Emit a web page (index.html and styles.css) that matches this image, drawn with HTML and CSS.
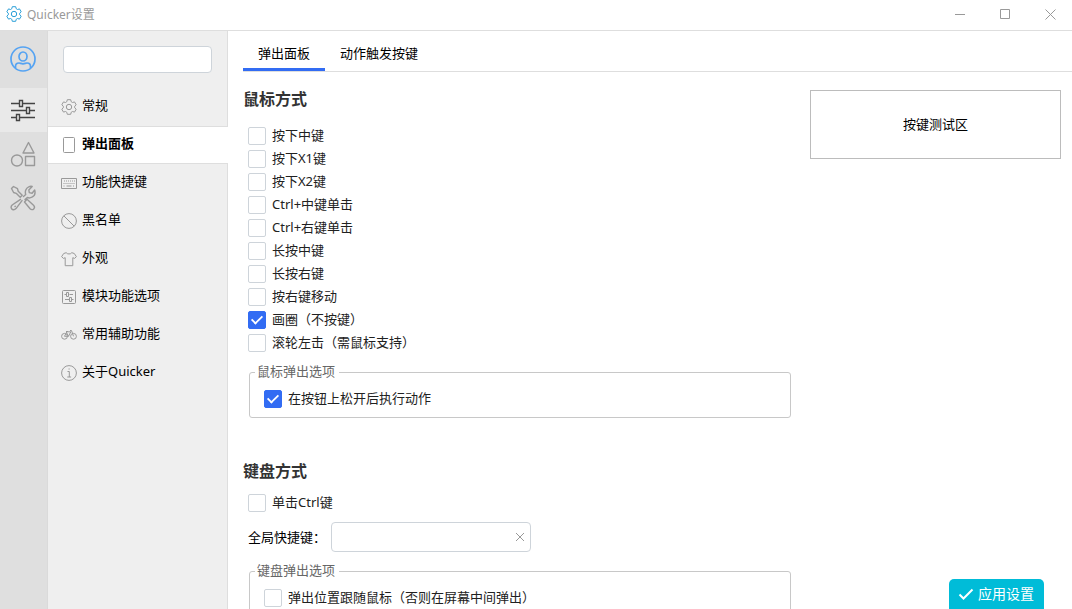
FILE: index.html
```html
<!DOCTYPE html>
<html lang="zh-CN">
<head>
<meta charset="utf-8">
<meta name="viewport" content="width=device-width, initial-scale=1">
<title>Quicker设置</title>
<link rel="stylesheet" href="styles.css">
</head>
<body>
<svg class="defs" aria-hidden="true">
  <symbol id="gear" viewBox="0 0 16 16">
    <path d="M6.3.7h3.4l.5 2 1.3.8 2-.6 1.7 2.9L13.700 7.200v1.600l1.500 1.400-1.700 2.900-2-.6-1.300.8-.5 2H6.300l-.5-2-1.300-.8-2 .6L.8 10.200l1.500-1.400V7.200L.8 5.800l1.700-2.900 2 .6 1.300-.8z"/>
    <circle cx="8" cy="8" r="2.700"/>
  </symbol>
</svg>
<header class="titlebar">
  <svg class="logo" viewBox="0 0 16 16"><use href="#gear"/></svg>
  <h1 class="title">Quicker设置</h1>
  <div class="window-buttons">
    <button class="window-button" type="button" aria-label="最小化"><svg viewBox="0 0 12 12"><path d="M1 6.500h10"/></svg></button>
    <button class="window-button" type="button" aria-label="最大化"><svg viewBox="0 0 12 12"><path d="M1.500 1.500h9v9h-9z"/></svg></button>
    <button class="window-button" type="button" aria-label="关闭"><svg viewBox="0 0 12 12"><path d="M1.500 1.500l10 10M11.500 1.500l-10 10"/></svg></button>
  </div>
</header>
<div class="workspace">
  <nav class="rail" aria-label="分类">
    <button class="rail-item rail-user" type="button" aria-label="用户">
      <svg viewBox="0 0 26 26"><circle cx="13" cy="13" r="12"/><ellipse cx="13" cy="10.500" rx="4" ry="4.500"/><path d="M5.500 22v-1.500c0-2 1.500-3.500 3.500-3.500 1.500 0 2 .8 4 .8s2.500-.8 4-.8c2 0 3.500 1.500 3.500 3.500V22"/></svg>
    </button>
    <button class="rail-item rail-active" type="button" aria-label="设置">
      <svg viewBox="0 0 26 26"><path d="M1 6.500h8M13 6.500h12M1 13.500h15M20 13.500h5M1 20.500h5M10 20.500h15M9.500 3.500h3v6h-3zM16.500 10.500h3v6h-3zM6.500 17.500h3v6h-3z"/></svg>
    </button>
    <button class="rail-item" type="button" aria-label="组件">
      <svg viewBox="0 0 26 26"><path d="M18.500 1.500L24 12H13zM15.500 15.500h9v9h-9z" stroke-linejoin="round"/><circle cx="7" cy="19.500" r="5.500"/></svg>
    </button>
    <button class="rail-item" type="button" aria-label="工具">
      <svg viewBox="0 0 26 26" stroke-linecap="round" stroke-linejoin="round"><path d="M1.500 3.500l2-2 4 2.200.7 2.600 4 4-2 2-4-4-2.600-.8zM14.500 17l2.500-2.700 6.500 6c1.200 1.200 1.200 2.600.2 3.600s-2.500 1-3.600-.2zM10.500 14.300L2.200 20c-1.500 1.500-1.200 3-.4 4s2.700 1 4.200-.4l6-8M13.500 11.500l2.200-2c-1-3 .2-6.500 3-7.700 1.200-.6 2.400-.7 3.500-.4l-3.400 3.500.5 2.700 2.800.6L24.700 5c.8 3-.2 6-2.700 7.200-1.700.9-3.300.9-4.700.3l-2.300 2.100M5 21.500l.3-.3"/></svg>
    </button>
  </nav>
  <aside class="sidebar">
    <div class="search"><input class="field search-input" type="text" aria-label="搜索设置"></div>
    <nav class="menu" aria-label="设置">
      <a class="menu-item" href="#general"><svg viewBox="0 0 16 16"><use href="#gear"/></svg>常规</a>
      <a class="menu-item menu-active" href="#panel" aria-current="page"><svg viewBox="0 0 16 16"><rect x="2.500" y=".5" width="11" height="15" rx="1"/></svg>弹出面板</a>
      <a class="menu-item" href="#hotkeys"><svg viewBox="0 0 16 16"><path d="M.5 3.500h15v10H.5z"/><path stroke-dasharray="1 1" d="M3 6h11M2.500 8.500h11M2.500 11h2M12 11h2"/><path d="M5.500 11h5"/></svg>功能快捷键</a>
      <a class="menu-item" href="#blacklist"><svg viewBox="0 0 16 16"><circle cx="8" cy="8" r="7.400"/><path d="M2.800 2.800l10.400 10.400"/></svg>黑名单</a>
      <a class="menu-item" href="#appearance"><svg viewBox="0 0 16 16"><path d="M5.200 1.700L2.700 2.500.6 5.700l1.800 1.700 1.800-.7v8h7.600v-8l1.800.7 1.800-1.700-2.100-3.200-2.500-.8c-1 1.700-4.600 1.700-5.600 0z"/></svg>外观</a>
      <a class="menu-item" href="#modules"><svg viewBox="0 0 16 16"><rect x="1.500" y="1.500" width="13" height="13" rx="1"/><path d="M3.500 5.500h2M8.500 5.500h3.500M4 10.500h4M11 10.500h1.500M5.500 3.500h2v4h-2zM8.500 8.500h2v4h-2z"/></svg>模块功能选项</a>
      <a class="menu-item" href="#assist"><svg viewBox="0 0 16 16"><circle cx="3.500" cy="9.300" r="2.900"/><circle cx="12.500" cy="9.300" r="2.900"/><path d="M3.500 9.300l2.300-4.500h4L7.500 9.300zM9 3.500h1.500l2 5.800M5 4.500h2M5.500 5.500l2 3.800"/></svg>常用辅助功能</a>
      <a class="menu-item" href="#about"><svg viewBox="0 0 16 16"><circle cx="8" cy="8" r="7.400"/><path d="M6.500 6.500h1.800V12M6.300 12h3.800M7.500 4h1.200"/></svg>关于Quicker</a>
    </nav>
  </aside>
  <main class="main">
    <div class="tabs" role="tablist">
      <button class="tab tab-active" type="button" role="tab" aria-selected="true">弹出面板</button>
      <button class="tab" type="button" role="tab" aria-selected="false">动作触发按键</button>
    </div>
    <div class="content">
      <div class="options">
        <section class="section">
          <h2 class="heading">鼠标方式</h2>
          <div class="checks">
            <label class="check"><input type="checkbox">按下中键</label>
            <label class="check"><input type="checkbox">按下X1键</label>
            <label class="check"><input type="checkbox">按下X2键</label>
            <label class="check"><input type="checkbox">Ctrl+中键单击</label>
            <label class="check"><input type="checkbox">Ctrl+右键单击</label>
            <label class="check"><input type="checkbox">长按中键</label>
            <label class="check"><input type="checkbox">长按右键</label>
            <label class="check"><input type="checkbox">按右键移动</label>
            <label class="check"><input type="checkbox" checked>画圈（不按键）</label>
            <label class="check"><input type="checkbox">滚轮左击（需鼠标支持）</label>
          </div>
          <fieldset class="group">
            <legend>鼠标弹出选项</legend>
            <label class="check"><input type="checkbox" checked>在按钮上松开后执行动作</label>
          </fieldset>
        </section>
        <section class="section">
          <h2 class="heading">键盘方式</h2>
          <div class="checks checks-tight">
            <label class="check"><input type="checkbox">单击Ctrl键</label>
          </div>
          <div class="hotkey">
            <label for="hotkey">全局快捷键：</label>
            <div class="hotkey-box">
              <input class="field hotkey-input" id="hotkey" type="text">
              <button class="clear" type="button" aria-label="清除"><svg viewBox="0 0 10 10"><path d="M1 1l8 8M9 1L1 9"/></svg></button>
            </div>
          </div>
          <fieldset class="group">
            <legend>键盘弹出选项</legend>
            <label class="check"><input type="checkbox">弹出位置跟随鼠标（否则在屏幕中间弹出）</label>
          </fieldset>
        </section>
      </div>
      <div class="test-area" tabindex="0">按键测试区</div>
    </div>
    <button class="apply" type="button"><svg viewBox="0 0 16 16"><path d="M1.500 8.500l4 4 9-9"/></svg>应用设置</button>
  </main>
</div>
</body>
</html>
```
FILE: styles.css
```css
* { box-sizing: border-box; }

body {
  margin: 0;
  height: 100vh;
  display: flex;
  flex-direction: column;
  overflow: hidden;
  background: #fff;
  color: #000;
  font: 13px/20px "Noto Sans", "Noto Sans CJK SC", sans-serif;
}

button, input { font: inherit; color: inherit; }
button { margin: 0; padding: 0; border: 0; background: none; }
svg { display: block; flex: none; fill: none; stroke: currentColor; }
.defs { position: absolute; width: 0; height: 0; }

.titlebar {
  flex: none;
  display: flex;
  align-items: center;
  height: 31px;
  padding: 0 0 2px 6px;
  border-bottom: 1px solid #dedede;
  color: #999;
}
.logo { width: 16px; height: 16px; color: #2a9fd8; }
.title { margin: 0 0 0 5px; padding-top: 2px; font-size: 12px; font-weight: 400; }
.window-buttons { display: flex; margin-left: auto; }
.window-button { display: grid; place-items: center; width: 45px; height: 28px; }
.window-button svg { width: 12px; height: 12px; }

.workspace { flex: 1; display: flex; min-height: 0; }

.rail { flex: none; width: 48px; background: #dfdfdf; border-right: 1px solid #dadada; }
.rail-item { display: grid; place-items: center; width: 100%; height: 44px; padding-right: 2px; color: #999; }
.rail-item svg { width: 26px; height: 26px; stroke-width: 1.4; }
.rail-user { height: 57px; padding-bottom: 2px; color: #55a3f2; }
.rail-user svg { stroke-width: 1.7; }
.rail-active { background: #e9e9e9; color: #444; }

.sidebar { flex: none; width: 180px; background: #efefef; box-shadow: inset -1px 0 #dedede; }
.search { padding: 15px 16px 15px 15px; }
.field { display: block; width: 100%; border: 1px solid #ced4da; border-radius: 4px; background: #fff; outline: none; }
.search-input { height: 27px; padding: 0 8px; }
.menu-item {
  display: flex;
  align-items: center;
  gap: 5px;
  height: 38px;
  padding: 0 13px 4px;
  border: solid transparent;
  border-width: 1px 0;
  color: #000;
  text-decoration: none;
}
.menu-item svg { width: 16px; height: 16px; margin-top: 4px; color: #999; }
.menu-active { border-color: #dedede; background: #fff; font-weight: 700; }

.main { position: relative; flex: 1; display: flex; flex-direction: column; min-width: 0; overflow: hidden; }
.tabs { flex: none; display: flex; height: 41px; margin-left: 15px; border-bottom: 1px solid #dedede; }
.tab { height: 40px; padding: 6px 15px 0; border-bottom: 3px solid transparent; }
.tab-active { border-bottom-color: #326cf3; }

.content {
  display: grid;
  grid-template-columns: minmax(0, 1fr) 251px;
  align-items: start;
  gap: 19px;
  padding: 18px 11px 0 15px;
}
.section { margin-bottom: 44px; }
.heading { margin: 0; font-size: 16px; line-height: 18px; color: #333; }
.checks { margin: 15px 0 0 5px; }
.checks-tight { margin-top: 10px; }
.check { display: flex; align-items: center; gap: 6px; height: 23px; color: #212121; }
.check input {
  appearance: none;
  flex: none;
  display: grid;
  place-items: center;
  width: 18px;
  height: 18px;
  margin: 2px 0 0;
  border: 1px solid #ced4da;
  border-radius: 2px;
  background: #fff;
}
.check input:checked { border-color: #326cf3; background: #326cf3; }
.check input:checked::before {
  content: "";
  width: 10px;
  height: 5px;
  margin-bottom: 3px;
  border: solid #fff;
  border-width: 0 0 2px 2px;
  transform: rotate(-45deg) scale(.9);
}

.group { min-width: 0; margin: 9px 0 0 6px; padding: 4px 14px 8px; border: 1px solid #c8c8c8; border-radius: 3px; }
.group legend { margin-left: -9px; padding: 0 4px 2px 2px; line-height: 18px; color: #666; }

.hotkey { display: flex; align-items: center; gap: 5px; margin: 9px 0 0 5px; }
.hotkey-box { position: relative; width: 200px; }
.hotkey-input { height: 30px; padding: 0 24px 0 8px; }
.clear { position: absolute; top: 0; right: 6px; display: grid; place-items: center; height: 30px; color: #999; }
.clear svg { width: 10px; height: 10px; }

.test-area { display: grid; place-items: center; height: 69px; padding-bottom: 2px; border: 1px solid #bcbcbc; }

.apply {
  position: absolute;
  right: 28px;
  bottom: 0;
  display: flex;
  align-items: center;
  gap: 4px;
  height: 30px;
  padding: 0 10px 0 9px;
  border-radius: 5px 5px 0 0;
  background: #00bcd8;
  color: #fff;
  font-size: 14px;
}
.apply svg { width: 16px; height: 16px; stroke-width: 2; }
```
